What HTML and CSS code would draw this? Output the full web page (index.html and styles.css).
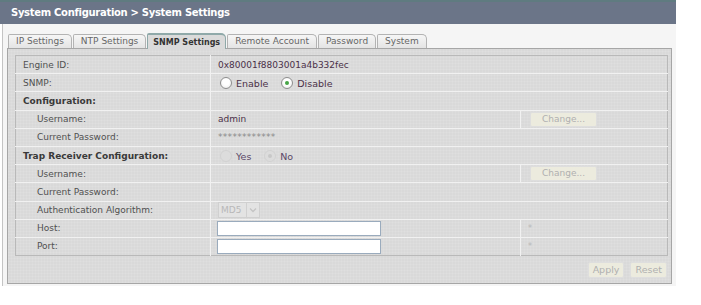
FILE: index.html
```html
<!DOCTYPE html>
<html>
<head>
<meta charset="utf-8">
<link rel="stylesheet" href="styles.css">
</head>
<body>
<div class="page">
  <div class="titlebar">System Configuration &gt; System Settings</div>
  <div class="content">
    <div class="tabs">
      <div class="tab">IP Settings</div>
      <div class="tab">NTP Settings</div>
      <div class="tab active">SNMP Settings</div>
      <div class="tab">Remote Account</div>
      <div class="tab">Password</div>
      <div class="tab">System</div>
    </div>
    <div class="panel">
      <table class="grid">
        <tr><td class="lbl">Engine ID:</td><td class="val" colspan="2">0x80001f8803001a4b332fec</td></tr>
        <tr><td class="lbl">SNMP:</td><td class="val" colspan="2">
          <span class="radio"></span><span class="opt">Enable</span>
          <span class="radio on"></span><span class="opt">Disable</span>
        </td></tr>
        <tr><td class="lbl head">Configuration:</td><td colspan="2"></td></tr>
        <tr><td class="lbl sub">Username:</td><td class="val">admin</td><td class="btncell"><span class="btn">Change...</span></td></tr>
        <tr><td class="lbl sub">Current Password:</td><td class="val pw" colspan="2">************</td></tr>
        <tr><td class="lbl head">Trap Receiver Configuration:</td><td class="val" colspan="2">
          <span class="radio dis"></span><span class="opt dopt">Yes</span>
          <span class="radio dis on"></span><span class="opt dopt">No</span>
        </td></tr>
        <tr><td class="lbl sub">Username:</td><td></td><td class="btncell"><span class="btn">Change...</span></td></tr>
        <tr><td class="lbl sub">Current Password:</td><td colspan="2"></td></tr>
        <tr><td class="lbl sub">Authentication Algorithm:</td><td class="val" colspan="2">
          <span class="select"><span class="seltext">MD5</span><span class="selarrow"><svg width="8" height="6" viewBox="0 0 8 6"><path d="M1 1.5 L4 4.5 L7 1.5" fill="none" stroke="#c4c4c4" stroke-width="1.3"/></svg></span></span>
        </td></tr>
        <tr><td class="lbl sub">Host:</td><td class="val"><span class="input"></span></td><td class="star">*</td></tr>
        <tr><td class="lbl sub">Port:</td><td class="val"><span class="input"></span></td><td class="star">*</td></tr>
      </table>
      <div class="actions">
        <span class="btn big">Apply</span>
        <span class="btn big">Reset</span>
      </div>
    </div>
  </div>
</div>
</body>
</html>
```
FILE: styles.css
```css
html, body {
  margin: 0;
  padding: 0;
  background: #ffffff;
}
body {
  font-family: "DejaVu Sans", Verdana, sans-serif;
  font-size: 9px;
  color: #444;
}
.page {
  width: 676px;
}
.titlebar {
  height: 22px;
  border-top: 2px solid #5f7b80;
  background: #6b7588;
  color: #ffffff;
  font-weight: bold;
  font-size: 10px;
  letter-spacing: -0.3px;
  line-height: 22px;
  padding-left: 11px;
}
.content {
  background: #f5f5f5;
  border-left: 1px solid #c4c4c4;
  margin-left: 2px;
  padding: 10px 4px 2px 4px;
}
.tabs {
  display: flex;
  gap: 1px;
  padding-left: 1px;
  height: 14px;
  align-items: flex-end;
}
.tab {
  height: 13px;
  line-height: 13px;
  padding: 0 7px;
  border: 1px solid #b3b3b3;
  border-bottom: none;
  border-radius: 2px 5px 0 0;
  background: linear-gradient(#f6f6f6, #e4e4e4);
  color: #666;
  font-size: 9px;
}
.tab.active {
  height: 14px;
  line-height: 15px;
  padding: 0 5px;
  border-top: 2px solid #6f9c9c;
  border-color: #8fa9a9;
  background: #dadada;
  color: #333;
  font-weight: bold;
  font-size: 8px;
  position: relative;
  top: 1px;
}
.panel {
  border: 1px solid #a6a6a6;
  background-color: #d9d9d9;
  background-image:
    repeating-linear-gradient(0deg, rgba(255,255,255,0.08) 0 1px, transparent 1px 3px),
    repeating-linear-gradient(90deg, rgba(255,255,255,0.08) 0 1px, transparent 1px 3px);
  padding: 6px 3px 5px 7px;
}
.grid {
  width: 100%;
  border-collapse: collapse;
  border: 1px solid #b9b9b9;
}
.grid td {
  height: 17.2px;
  padding: 0;
  border-top: 1px solid #f1f1f1;
  vertical-align: middle;
  white-space: nowrap;
}
.grid tr:first-child td {
  border-top: none;
}
.grid td.lbl {
  width: 187px;
  padding-left: 7px;
  border-right: 1px solid #f1f1f1;
  color: #505050;
}
.grid td.sub {
  padding-left: 21px;
  width: 173px;
}
.grid td.head {
  font-weight: bold;
  color: #3a3a3a;
}
.grid td.val {
  padding-left: 7px;
  color: #4a3048;
}
.grid td.pw {
  color: #8a8a8a;
  letter-spacing: 0.3px;
}
.grid td.btncell {
  width: 137px;
  border-left: 1px solid #f1f1f1;
  padding-left: 9px;
}
.grid td.star {
  border-left: 1px solid #f1f1f1;
  padding-left: 7px;
  color: #b8b8b8;
  font-size: 8px;
}
.radio {
  display: inline-block;
  width: 10px;
  height: 10px;
  border: 1px solid #8d8d8d;
  border-radius: 50%;
  background: radial-gradient(circle at 50% 40%, #ffffff 40%, #e6e6e6);
  vertical-align: -2px;
  margin-left: 2px;
  position: relative;
}
.radio.on::after {
  content: "";
  position: absolute;
  left: 3px;
  top: 3px;
  width: 4px;
  height: 4px;
  border-radius: 50%;
  background: #46a546;
}
.radio.dis {
  border-color: #d2d2d2;
  background: #dcdcdc;
}
.radio.dis.on::after {
  background: #c8c8c8;
}
.opt {
  margin-left: 4px;
  margin-right: 8px;
  font-size: 9.5px;
}
.dopt {
  color: #5a4868;
}
.btn {
  display: inline-block;
  height: 13px;
  line-height: 13px;
  padding: 0 11px;
  border: 1px solid #dedede;
  border-radius: 2px;
  background: #ecebde;
  color: #b0b0b0;
  font-size: 9px;
  vertical-align: middle;
}
.select {
  display: inline-flex;
  height: 14px;
  width: 40px;
  border: 1px solid #d0d0d0;
  background: #e3e3e3;
  vertical-align: middle;
}
.seltext {
  flex: 1;
  color: #b8b8b8;
  line-height: 14px;
  padding-left: 2px;
}
.selarrow {
  width: 12px;
  border-left: 1px solid #d0d0d0;
  display: flex;
  align-items: center;
  justify-content: center;
}
.input {
  display: inline-block;
  width: 162px;
  height: 13px;
  border: 1px solid #9aabbd;
  background: #ffffff;
  vertical-align: middle;
  margin-left: -1px;
}
.actions {
  display: flex;
  justify-content: flex-end;
  gap: 6px;
  padding-top: 6px;
  padding-right: 1px;
}
.btn.big {
  height: 14px;
  line-height: 14px;
  padding: 0 4px;
  font-size: 9.5px;
}
```
